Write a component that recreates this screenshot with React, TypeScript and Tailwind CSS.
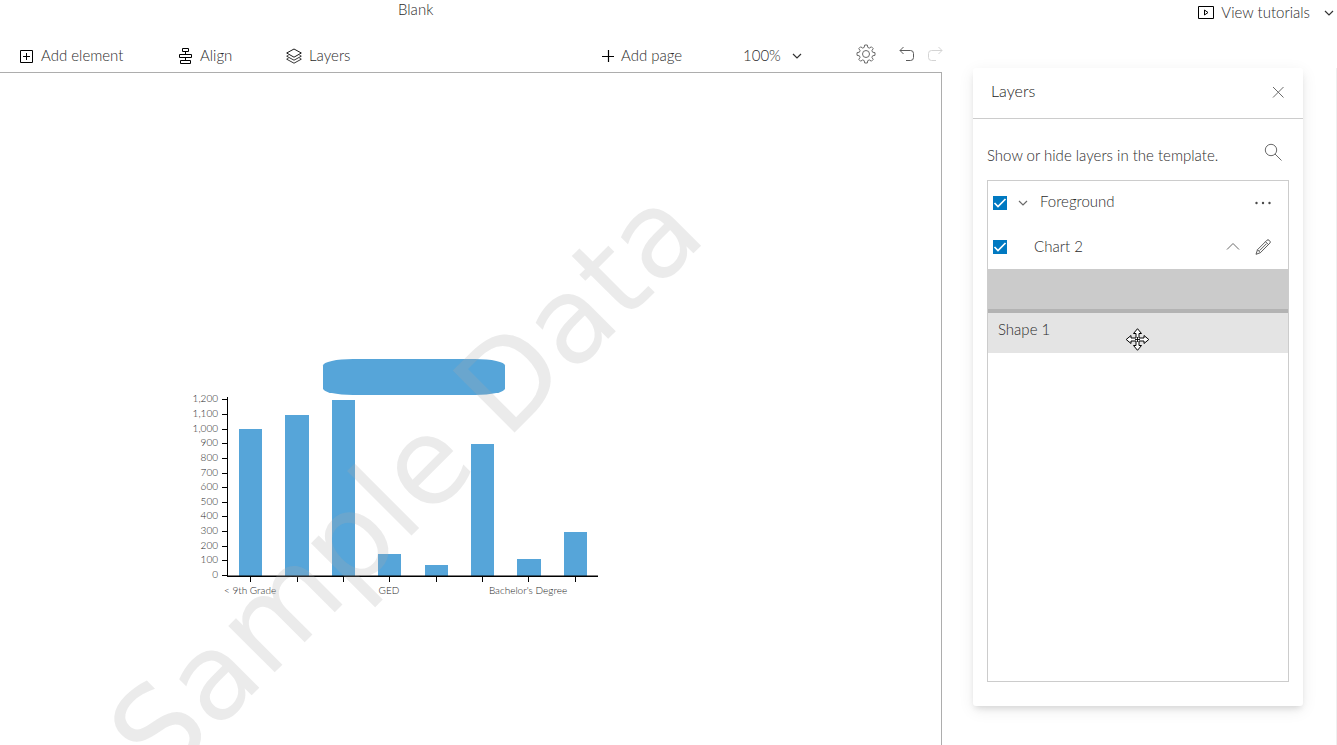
import { useState } from "react";
import type { ReactNode } from "react";

const BARS = [
  { x: 239, top: 429, width: 23 },
  { x: 285, top: 415, width: 24 },
  { x: 332, top: 400, width: 23 },
  { x: 378, top: 554, width: 23 },
  { x: 425, top: 565, width: 23 },
  { x: 471, top: 444, width: 23 },
  { x: 517, top: 559, width: 24 },
  { x: 564, top: 532, width: 23 },
];

const Y_TICKS = [
  { label: "1,200", y: 399 },
  { label: "1,100", y: 414 },
  { label: "1,000", y: 429 },
  { label: "900", y: 443 },
  { label: "800", y: 458 },
  { label: "700", y: 473 },
  { label: "600", y: 487 },
  { label: "500", y: 502 },
  { label: "400", y: 516 },
  { label: "300", y: 531 },
  { label: "200", y: 546 },
  { label: "100", y: 560 },
  { label: "0", y: 575 },
];

const X_TICKS = [
  { label: "< 9th Grade", x: 250 },
  { label: "", x: 297 },
  { label: "", x: 343 },
  { label: "GED", x: 389 },
  { label: "", x: 436 },
  { label: "", x: 482 },
  { label: "Bachelor's Degree", x: 528 },
  { label: "", x: 575 },
];

function Icon({ size = 16, className = "", children }: { size?: number; className?: string; children: ReactNode }) {
  return (
    <svg
      width={size}
      height={size}
      viewBox={`0 0 ${size} ${size}`}
      fill="none"
      stroke="currentColor"
      className={`shrink-0 ${className}`}
      aria-hidden="true"
    >
      {children}
    </svg>
  );
}

function ChevronDown({ className = "" }: { className?: string }) {
  return (
    <Icon size={10} className={className}>
      <path d="M1 3l4 4 4-4" strokeWidth="1.2" />
    </Icon>
  );
}

function Header() {
  return (
    <header className="flex h-[25px] items-start justify-between pr-[3px] pl-[398px]">
      <h1 className="text-[15px] leading-[18px]">Blank</h1>
      <button type="button" className="flex items-center text-[15px] leading-6">
        <Icon className="mt-0.5 mr-[7px] text-black">
          <path d="M.5 1.500h15v12H.5z" />
          <path d="M6.500 5v5l3.500-2.500z" />
        </Icon>
        View tutorials
        <ChevronDown className="mt-0.5 ml-[14px] text-[#333]" />
      </button>
    </header>
  );
}

function Toolbar() {
  return (
    <div className="flex h-[47px] items-center pt-3 pl-5 text-[15px] leading-5 whitespace-nowrap">
      <div className="flex w-[582px] shrink-0">
        <button type="button" className="flex w-[159px] items-center gap-[7px]">
          <Icon size={14} className="mt-0.5 text-black">
            <path d="M.5 1.500h12v12H.5zM3 7.500h7M6.500 4v7" />
          </Icon>
          Add element
        </button>
        <button type="button" className="flex w-[107px] items-center gap-[7px]">
          <svg
            width="14"
            height="16"
            viewBox="0 0 14 16"
            fill="none"
            stroke="currentColor"
            className="mt-0.5 shrink-0 text-black"
            aria-hidden="true"
          >
            <path d="M3.500 .5h6v3h-6zM.5 6.500h12v3H.5zM1.500 12.500h10v3h-10zM6.500 3.500v3M6.500 9.500v3" />
          </svg>
          Align
        </button>
        <button type="button" className="flex items-center gap-[7px]">
          <Icon className="mt-0.5 text-black">
            <path d="M8 1l7.300 4L8 9.200.7 5z" strokeWidth=".9" />
            <path d="M2.500 7.200L.7 8.200 8 12.200l7.300-4-1.800-1M2.500 10.200L.7 11.200 8 15.200l7.300-4-1.800-1" strokeWidth=".8" />
          </Icon>
          Layers
        </button>
      </div>
      <button type="button" className="flex w-[141px] shrink-0 items-center gap-[7px]">
        <Icon size={12} className="mt-0.5 text-black">
          <path d="M0 6.500h12M6.500 0v12" strokeWidth="1.2" />
        </Icon>
        Add page
      </button>
      <label className="relative flex w-[62px] shrink-0 items-center">
        <select aria-label="Zoom" defaultValue="100" className="w-full appearance-none bg-transparent">
          <option value="50">50%</option>
          <option value="100">100%</option>
          <option value="200">200%</option>
        </select>
        <ChevronDown className="pointer-events-none absolute right-[3px] mt-0.5 text-[#333]" />
      </label>
      <button type="button" aria-label="Settings" className="mb-0.5 ml-[51px] text-[#6a6a6a]">
        <Icon size={20}>
          <path d="M8.700 1h2.600l.5 2.400 1.500.7 2.100-1.300 1.800 1.800-1.300 2.100.7 1.500L19 8.700v2.600l-2.400.5-.7 1.500 1.300 2.100-1.800 1.800-2.100-1.300-1.500.7-.5 2.400H8.700l-.5-2.400-1.500-.7-2.100 1.300-1.800-1.800 1.300-2.100-.7-1.500L1 11.300V8.700l2.400-.5.7-1.500-1.300-2.100 1.800-1.800 2.100 1.300 1.500-.7z" strokeLinejoin="round" />
          <circle cx="10" cy="10" r="3.500" />
        </Icon>
      </button>
      <button type="button" aria-label="Undo" className="mb-0.5 ml-[23px] text-[#5a5a5a]">
        <Icon>
          <path d="M4.500 1L1 4.500 4.500 8M1 4.500h10.500q3 0 3 3v4q0 3-3 3H7" />
        </Icon>
      </button>
      <button type="button" aria-label="Redo" disabled className="mb-0.5 ml-3 text-[#d4d4d4]">
        <Icon>
          <path d="M11.500 1L15 4.500 11.500 8M15 4.500H4.500q-3 0-3 3v4q0 3 3 3H9" />
        </Icon>
      </button>
    </div>
  );
}

function Chart() {
  return (
    <svg
      width="440"
      height="250"
      viewBox="180 355 440 250"
      className="absolute top-[282px] left-[180px]"
      role="img"
      aria-label="Education level chart"
    >
      <rect x="323" y="359" width="182" height="36" rx="30" ry="6.500" fill="#56a5d9" />
      <g fill="#56a5d9" shapeRendering="crispEdges">
        {BARS.map((bar) => (
          <rect key={bar.x} x={bar.x} y={bar.top} width={bar.width} height={576 - bar.top} />
        ))}
      </g>
      <g shapeRendering="crispEdges">
        <rect x="227" y="575" width="371" height="1" fill="#000" fillOpacity=".5" />
        <rect x="227" y="576" width="371" height="1" />
        <rect x="227" y="397" width="1" height="180" />
        {Y_TICKS.map((tick) => (
          <rect key={tick.label} x="222" y={tick.y} width="5" height="1" />
        ))}
        {X_TICKS.map((tick) => (
          <rect key={tick.x} x={tick.x} y="577" width="1" height="5" />
        ))}
      </g>
      <g fill="#1f1f1f" className="text-[10px]">
        {Y_TICKS.map((tick) => (
          <text key={tick.label} x="218" y={tick.y + 3} textAnchor="end">
            {tick.label}
          </text>
        ))}
        {X_TICKS.filter((tick) => tick.label).map((tick) => (
          <text key={tick.label} x={tick.x} y="594" textAnchor="middle">
            {tick.label}
          </text>
        ))}
      </g>
    </svg>
  );
}

function Canvas() {
  return (
    <main className="relative flex-1 overflow-hidden border-t border-r border-[#adadad]">
      <Chart />
      <div className="pointer-events-none absolute top-[410px] left-[406px] -translate-x-1/2 -translate-y-1/2 -rotate-45 font-['DejaVu_Sans',sans-serif] text-[120px] leading-none font-normal whitespace-nowrap text-[#aaaaaa]/24">
        Sample Data
      </div>
    </main>
  );
}

function LayerCheckbox({ label }: { label: string }) {
  const [checked, setChecked] = useState(true);
  return (
    <span className="relative flex size-3.5 shrink-0">
      <input
        type="checkbox"
        aria-label={label}
        checked={checked}
        onChange={() => setChecked(!checked)}
        className="size-3.5 appearance-none border border-[#0079c1] checked:bg-[#0079c1]"
      />
      {checked && (
        <Icon size={14} className="pointer-events-none absolute inset-0 text-white">
          <path d="M1.500 7l3.500 3.500L12.500 3" strokeWidth="1.7" />
        </Icon>
      )}
    </span>
  );
}

function MoveCursor() {
  return (
    <svg
      width="24"
      height="24"
      viewBox="0 0 24 24"
      className="pointer-events-none absolute top-[15px] left-[138px]"
      fill="#fff"
      stroke="#000"
      strokeLinejoin="round"
      aria-hidden="true"
    >
      <path d="M11.500 .7L15.500 5.500h-2.500v4.500h5V7.500l4.800 4-4.800 4V13h-5v4.500h2.500L11.500 22.300 7.500 17.500H10V13H5v2.500l-4.800-4L5 7.500V10h5V5.500H7.500z" />
      <path d="M11.500 9v5M9 11.500h5" strokeWidth=".9" />
    </svg>
  );
}

function LayersPanel() {
  return (
    <section className="flex h-[638px] w-[330px] flex-col rounded-[3px] bg-white shadow-[0_4px_16px_rgba(0,0,0,0.08),0_4px_6px_-2px_rgba(0,0,0,0.12)]">
      <div className="flex h-[51px] items-center justify-between border-b border-[#cccccc] pr-[19px] pb-1 pl-[18px]">
        <h2 className="text-base leading-6 text-[#1a1a1a]">Layers</h2>
        <button type="button" aria-label="Close" className="mt-0.5 text-[#6a6a6a]">
          <Icon size={12}>
            <path d="M1 1l10.500 10.500M11.500 1L1 11.500" />
          </Icon>
        </button>
      </div>
      <div className="flex flex-1 flex-col px-3.5 pb-6">
        <div className="flex h-[61px] shrink-0 items-center justify-between pt-2.5 pr-1.5">
          <p className="text-[15px] leading-5">Show or hide layers in the template.</p>
          <button type="button" aria-label="Search layers" className="mb-1.5 text-[#6a6a6a]">
            <Icon size={20}>
              <circle cx="8" cy="8" r="5.700" />
              <path d="M12 12l6.500 6.500" />
            </Icon>
          </button>
        </div>
        <ul className="flex-1 border border-[#cccccc] text-[15px] leading-5">
          <li className="flex h-11 items-center pl-[5px]">
            <LayerCheckbox label="Foreground" />
            <button type="button" aria-label="Collapse Foreground" className="ml-[11px] text-[#6a6a6a]">
              <ChevronDown />
            </button>
            <span className="ml-3 flex-1 pb-[5px]">Foreground</span>
            <button type="button" aria-label="More options" className="mr-4 text-[#4a4a4a]">
              <svg width="18" height="4" viewBox="0 0 18 4" fill="currentColor" aria-hidden="true">
                <circle cx="2.500" cy="2" r="1.200" />
                <circle cx="9" cy="2" r="1.200" />
                <circle cx="15.500" cy="2" r="1.200" />
              </svg>
            </button>
          </li>
          <li className="flex h-11 items-center pl-[5px]">
            <LayerCheckbox label="Chart 2" />
            <span className="ml-[27px] flex-1 pb-[3px]">Chart 2</span>
            <button type="button" aria-label="Move up" className="text-[#6a6a6a]">
              <Icon size={14}>
                <path d="M1 9.500l6-6 6 6" />
              </Icon>
            </button>
            <button type="button" aria-label="Edit Chart 2" className="mr-[17px] ml-[15px] text-[#5a5a5a]">
              <Icon>
                <path d="M1 15.300l1.500-4.600L12 1.200q1-.9 2 0l.9.900q.9 1 0 2L5.400 13.700zM10.500 2.700l2.900 2.900M2.500 10.700l2.900 3M4.500 11.700l7-7" />
              </Icon>
            </button>
          </li>
          <li className="h-11 border-b-4 border-[#b3b3b3] bg-[#cbcbcb]" />
          <li className="relative flex h-10 items-center bg-[#e4e4e4] pb-[9px] pl-2.5">
            Shape 1
            <MoveCursor />
          </li>
        </ul>
      </div>
    </section>
  );
}

export default function App() {
  return (
    <div className="flex h-screen flex-col overflow-hidden bg-white font-['Lato','Liberation_Sans',sans-serif] font-light text-[#2b2b2b]">
      <Header />
      <div className="flex min-h-0 flex-1">
        <div className="flex min-w-0 flex-1 flex-col">
          <Toolbar />
          <Canvas />
        </div>
        <aside className="mt-[43px] w-[395px] shrink-0 border-r border-[#efefef] pl-[31px]">
          <LayersPanel />
        </aside>
      </div>
    </div>
  );
}
